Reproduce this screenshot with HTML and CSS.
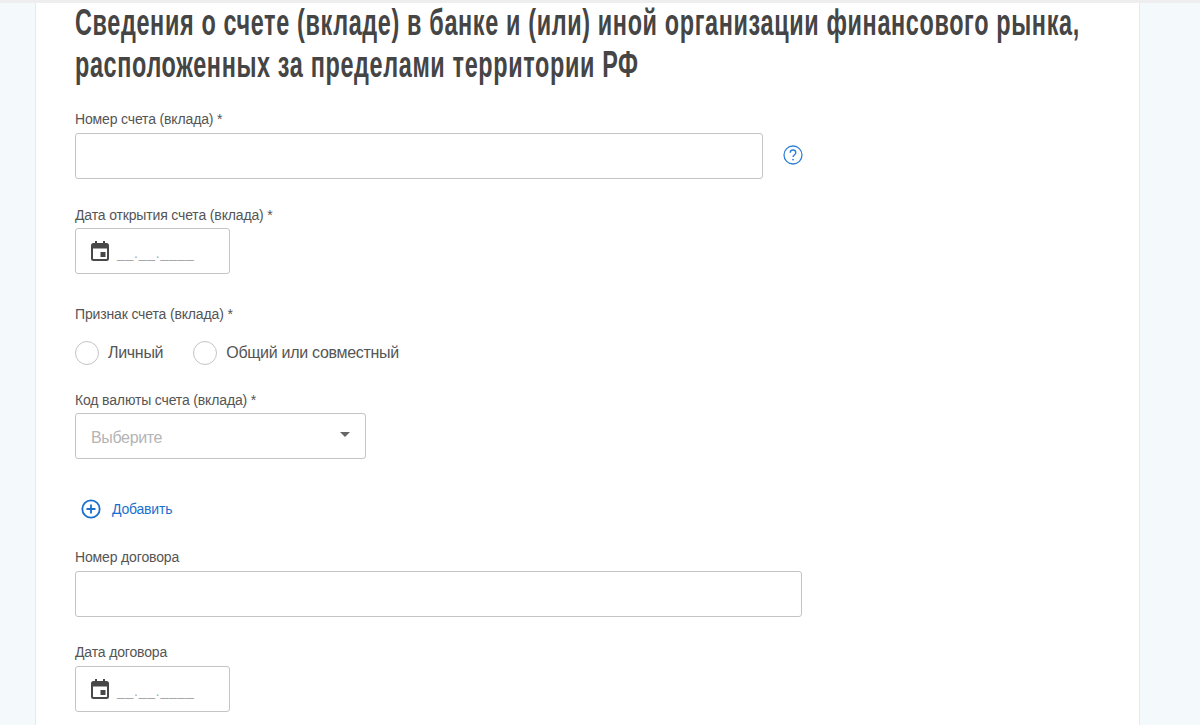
FILE: index.html
```html
<!DOCTYPE html>
<html lang="ru">
<head>
<meta charset="utf-8">
<title>Сведения о счете</title>
<link rel="stylesheet" href="styles.css">
</head>
<body>
<main class="card">
  <h1 class="title">Сведения о счете (вкладе) в банке и (или) иной организации финансового рынка, расположенных за пределами территории РФ</h1>

  <div class="field field-account">
    <div class="label">Номер счета (вклада) *</div>
    <div class="row">
      <div class="input input-account"></div>
      <svg class="help" viewBox="0 0 20 20" width="20" height="20" aria-hidden="true">
        <circle cx="10" cy="10" r="9" fill="none" stroke="#2e80d8" stroke-width="1.3"/>
        <path d="M7.2 7.8a2.8 2.8 0 0 1 5.6 0c0 1.9-2.8 2-2.8 4.2" fill="none" stroke="#2e80d8" stroke-width="1.4"/>
        <circle cx="10" cy="14.6" r="0.9" fill="#2e80d8"/>
      </svg>
    </div>
  </div>

  <div class="field field-open">
    <div class="label">Дата открытия счета (вклада) *</div>
    <div class="input input-date">
      <svg class="cal" viewBox="0 0 18 20" width="18" height="20" aria-hidden="true"><path d="M4 0h2v2h6V0h2v2h1.5A2.5 2.5 0 0 1 18 4.500v13a2.500 2.500 0 0 1-2.500 2.500h-13A2.500 2.500 0 0 1 0 17.500v-13A2.500 2.500 0 0 1 2.500 2H4zM2 7.500v10c0 .3.200.5.500.5h13c.3 0 .5-.2.5-.5v-10zM9.500 11h5v5h-5z" fill="#484848"/></svg>
      <span class="mask">__.__.____</span>
    </div>
  </div>

  <div class="field field-sign">
    <div class="label">Признак счета (вклада) *</div>
    <div class="radios">
      <span class="radio"><span class="dot"></span>Личный</span>
      <span class="radio"><span class="dot"></span>Общий или совместный</span>
    </div>
  </div>

  <div class="field field-currency">
    <div class="label">Код валюты счета (вклада) *</div>
    <div class="input input-select">
      <span class="placeholder">Выберите</span>
      <span class="caret"></span>
    </div>
  </div>

  <div class="add">
    <svg viewBox="0 0 20 20" width="20" height="20" aria-hidden="true">
      <circle cx="10" cy="10" r="8.700" fill="none" stroke="#1a6fce" stroke-width="1.800"/>
      <path d="M10 5.500v9M5.500 10h9" fill="none" stroke="#1a6fce" stroke-width="1.800"/>
    </svg>
    <span>Добавить</span>
  </div>

  <div class="field field-contract">
    <div class="label">Номер договора</div>
    <div class="input input-contract"></div>
  </div>

  <div class="field field-contract-date">
    <div class="label">Дата договора</div>
    <div class="input input-date">
      <svg class="cal" viewBox="0 0 18 20" width="18" height="20" aria-hidden="true"><path d="M4 0h2v2h6V0h2v2h1.5A2.5 2.5 0 0 1 18 4.500v13a2.500 2.500 0 0 1-2.500 2.500h-13A2.500 2.500 0 0 1 0 17.500v-13A2.500 2.500 0 0 1 2.500 2H4zM2 7.500v10c0 .3.200.5.500.5h13c.3 0 .5-.2.5-.5v-10zM9.500 11h5v5h-5z" fill="#484848"/></svg>
      <span class="mask">__.__.____</span>
    </div>
  </div>
</main>
</body>
</html>
```

FILE: styles.css
```css
* { box-sizing: border-box; }
html, body { margin: 0; height: 725px; overflow: hidden; }
body {
  background: #f4f9fc;
  border-top: 3px solid #eeeeee;
  font-family: "Liberation Sans", Arial, sans-serif;
  color: #4d4d4d;
}
.card {
  width: 1105px;
  height: 722px;
  margin-left: 35px;
  background: #fff;
  border-left: 1px solid #e3ebef;
  border-right: 1px solid #e3ebef;
  padding-left: 39px;
  overflow: hidden;
}
.title {
  margin: -1px 0 0;
  width: 1560px;
  transform: scaleX(0.65);
  transform-origin: left top;
  font-family: "Liberation Sans", sans-serif;
  font-size: 36px;
  line-height: 42px;
  font-weight: 700;
  letter-spacing: 1px;
  color: #454545;
}
.label { font-size: 14px; line-height: 16px; letter-spacing: -0.15px; color: #555; }
.input {
  background: #fff;
  border: 1px solid #c4c4c4;
  border-radius: 3px;
  height: 46px;
}
.row { display: flex; align-items: center; margin-top: 6px; }
.input-account { width: 688px; }
.help { margin: -2px 0 0 20px; }
.field-account { margin-top: 25px; }
.field-open { margin-top: 28px; }
.field-open .input { margin-top: 5px; }
.field-contract-date .input { margin-top: 6px; }
.input-date {
  width: 155px;
  display: flex;
  align-items: center;
  padding-left: 15px;
}
.cal { flex: none; }
.mask { margin-left: 8px; font-size: 14px; letter-spacing: 0.75px; color: #a8a8a8; position: relative; top: 2px; }
.field-sign { margin-top: 32px; }
.radios { display: flex; margin-top: 19px; gap: 30px; }
.radio { display: flex; align-items: center; font-size: 16px; line-height: 24px; letter-spacing: -0.3px; color: #555; }
.dot {
  width: 24px; height: 24px;
  border: 1px solid #c4c4c4;
  border-radius: 50%;
  margin-right: 9px;
}
.field-currency { margin-top: 27px; }
.input-select {
  margin-top: 5px;
  width: 291px;
  display: flex;
  align-items: center;
  justify-content: space-between;
  padding: 0 15px;
}
.placeholder { font-size: 16px; letter-spacing: -0.35px; color: #b4b4b4; position: relative; top: 2px; }
.caret {
  width: 0; height: 0;
  border-left: 5px solid transparent;
  border-right: 5px solid transparent;
  border-top: 5px solid #666;
  margin-top: -3px;
}
.add {
  display: flex;
  align-items: center;
  margin: 39px 0 0 6px;
  height: 22px;
  color: #1a6fce;
  font-size: 14px;
  letter-spacing: -0.2px;
}
.add span { margin-left: 11px; }
.field-contract { margin-top: 29px; }
.input-contract { margin-top: 6px; width: 727px; height: 46px; }
.field-contract-date { margin-top: 27px; }
```
